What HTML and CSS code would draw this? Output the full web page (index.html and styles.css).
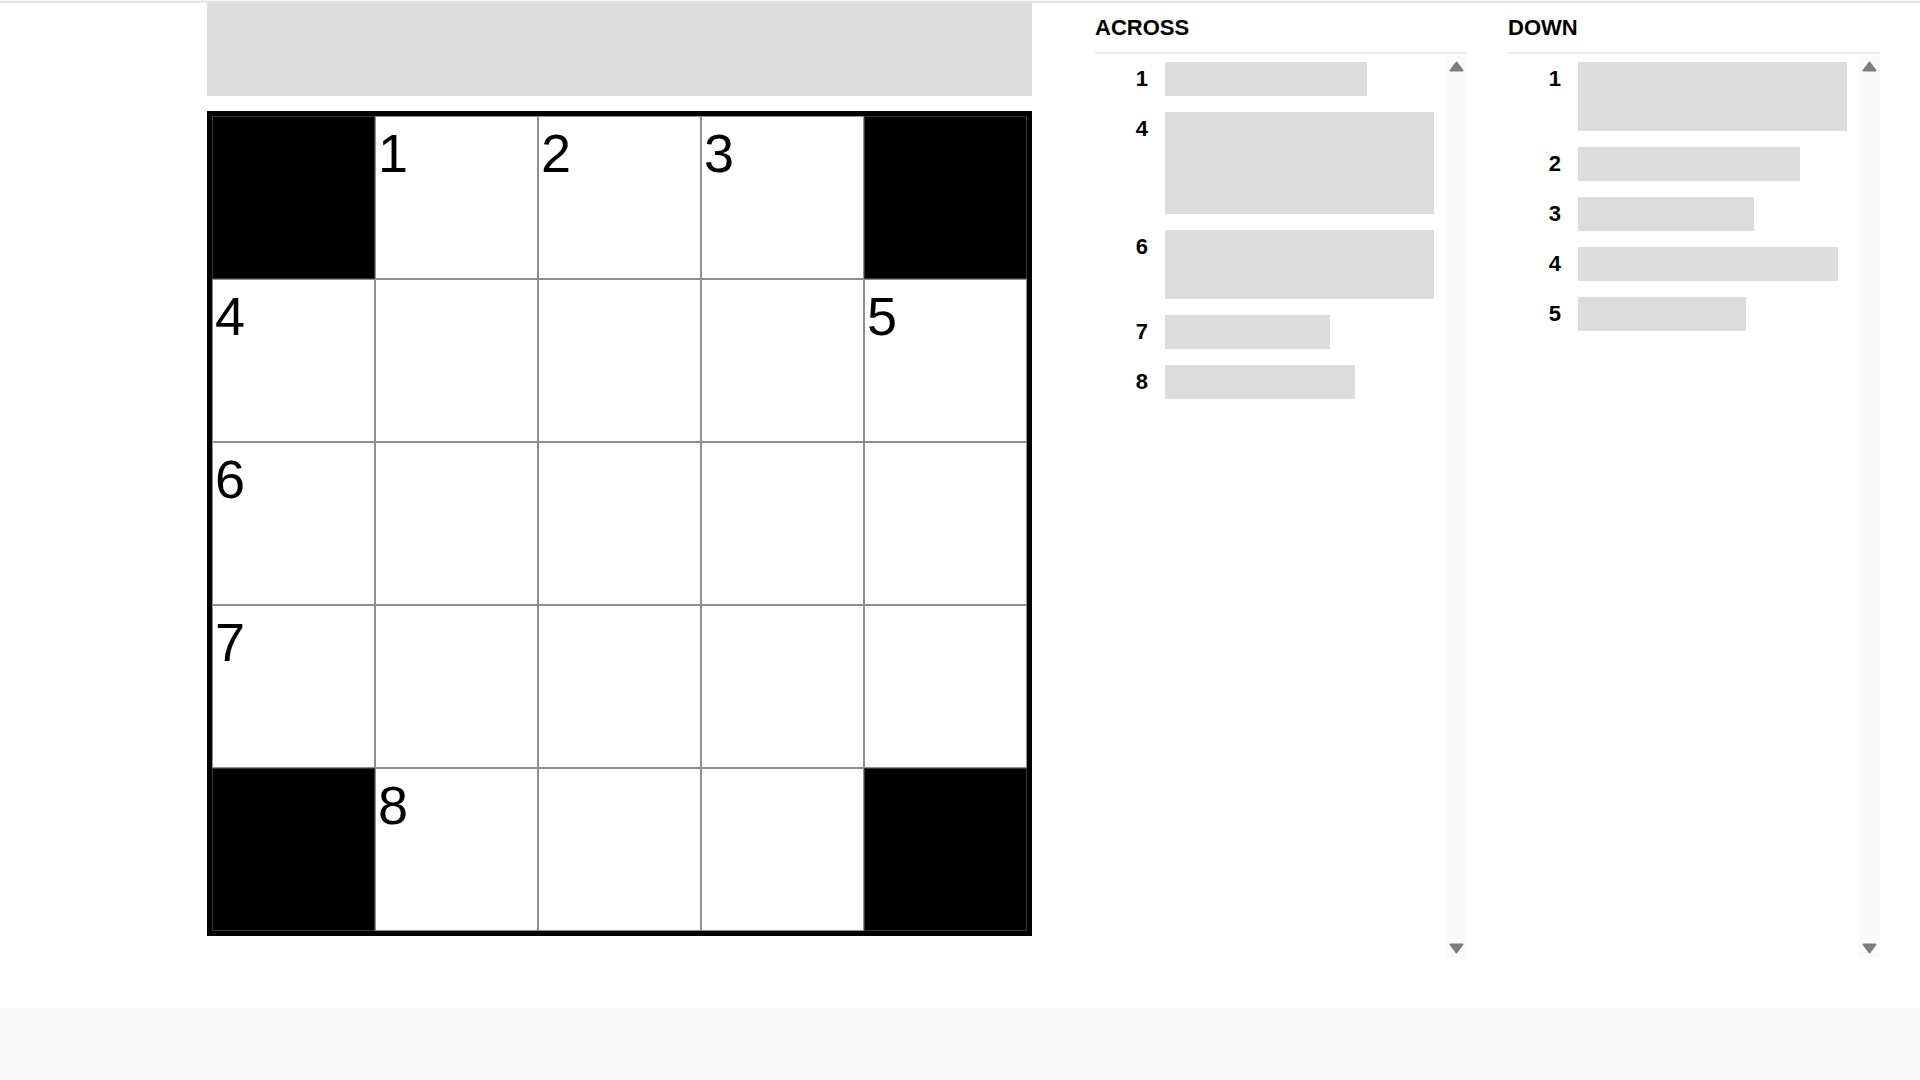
FILE: index.html
```html
<!DOCTYPE html>
<html lang="en">
<head>
<meta charset="utf-8">
<title>Mini Crossword</title>
<link rel="stylesheet" href="styles.css">
</head>
<body>
<div class="topline"></div>
<main class="main">
  <section class="board">
    <div class="clue-banner"></div>
    <div class="grid">
      <div class="cell block"></div>
      <div class="cell">1</div>
      <div class="cell">2</div>
      <div class="cell">3</div>
      <div class="cell block"></div>

      <div class="cell">4</div>
      <div class="cell"></div>
      <div class="cell"></div>
      <div class="cell"></div>
      <div class="cell">5</div>

      <div class="cell">6</div>
      <div class="cell"></div>
      <div class="cell"></div>
      <div class="cell"></div>
      <div class="cell"></div>

      <div class="cell">7</div>
      <div class="cell"></div>
      <div class="cell"></div>
      <div class="cell"></div>
      <div class="cell"></div>

      <div class="cell block"></div>
      <div class="cell">8</div>
      <div class="cell"></div>
      <div class="cell"></div>
      <div class="cell block"></div>
    </div>
  </section>

  <section class="clues across">
    <h2 class="clues-title">ACROSS</h2>
    <div class="clues-body">
      <ol class="clue-list">
        <li class="clue"><span class="clue-num">1</span><span class="clue-bar l1" style="width:202px"></span></li>
        <li class="clue"><span class="clue-num">4</span><span class="clue-bar l3" style="width:269px"></span></li>
        <li class="clue"><span class="clue-num">6</span><span class="clue-bar l2" style="width:269px"></span></li>
        <li class="clue"><span class="clue-num">7</span><span class="clue-bar l1" style="width:165px"></span></li>
        <li class="clue"><span class="clue-num">8</span><span class="clue-bar l1" style="width:190px"></span></li>
      </ol>
      <div class="scrollbar">
        <svg class="arrow" width="15" height="11" viewBox="0 0 15 11"><polygon points="7.5,1.5 13.5,9.5 1.5,9.5" /></svg>
        <svg class="arrow" width="15" height="11" viewBox="0 0 15 11"><polygon points="1.5,1.5 13.5,1.5 7.5,9.5" /></svg>
      </div>
    </div>
  </section>

  <section class="clues down">
    <h2 class="clues-title">DOWN</h2>
    <div class="clues-body">
      <ol class="clue-list">
        <li class="clue"><span class="clue-num">1</span><span class="clue-bar l2" style="width:269px"></span></li>
        <li class="clue"><span class="clue-num">2</span><span class="clue-bar l1" style="width:222px"></span></li>
        <li class="clue"><span class="clue-num">3</span><span class="clue-bar l1" style="width:176px"></span></li>
        <li class="clue"><span class="clue-num">4</span><span class="clue-bar l1" style="width:260px"></span></li>
        <li class="clue"><span class="clue-num">5</span><span class="clue-bar l1" style="width:168px"></span></li>
      </ol>
      <div class="scrollbar">
        <svg class="arrow" width="15" height="11" viewBox="0 0 15 11"><polygon points="7.5,1.5 13.5,9.5 1.5,9.5" /></svg>
        <svg class="arrow" width="15" height="11" viewBox="0 0 15 11"><polygon points="1.5,1.5 13.5,1.5 7.5,9.5" /></svg>
      </div>
    </div>
  </section>
</main>
<footer class="footer"></footer>
</body>
</html>
```

FILE: styles.css
```css
* {
  box-sizing: border-box;
}

html, body {
  margin: 0;
  padding: 0;
  background: #ffffff;
  font-family: "Liberation Sans", Arial, sans-serif;
  color: #000;
}

body {
  width: 1920px;
  height: 1080px;
  overflow: hidden;
}

.topline {
  height: 3px;
  border-top: 1px solid #f4f4f4;
  background: #e3e3e3;
}

.main {
  display: flex;
  align-items: flex-start;
  height: 1005px;
  padding-left: 207px;
}

.board {
  width: 825px;
  display: flex;
  flex-direction: column;
}

.clue-banner {
  height: 93px;
  background: #dcdcdc;
  margin-bottom: 15px;
}

.grid {
  display: grid;
  grid-template-columns: repeat(5, 163px);
  grid-template-rows: repeat(5, 163px);
  border: 5px solid #000;
  width: 825px;
  height: 825px;
  background: #000;
}

.cell {
  background: #fff;
  border: 1px solid #8e8e8e;
  font-size: 54px;
  line-height: 1;
  padding: 9px 0 0 2px;
  color: #000;
}

.cell.block {
  background: #000;
  border-color: #363636;
}

.clues {
  width: 372px;
  display: flex;
  flex-direction: column;
}

.across {
  margin-left: 63px;
}

.down {
  margin-left: 41px;
}

.clues-title {
  margin: 0;
  padding: 12px 0 12px 0;
  font-size: 22px;
  line-height: 25px;
  font-weight: 700;
  border-bottom: 2px solid #ebebeb;
}

.clues-body {
  display: flex;
  height: 904px;
}

.clue-list {
  flex: 1;
  list-style: none;
  margin: 0;
  padding: 8px 0 0 0;
}

.clue {
  display: flex;
  align-items: flex-start;
  margin-bottom: 16px;
}

.clue-num {
  width: 53px;
  margin-right: 17px;
  text-align: right;
  font-size: 22px;
  font-weight: 700;
  line-height: 34px;
  flex: none;
}

.clue-bar {
  display: block;
  background: #dcdcdc;
  flex: none;
}

.clue-bar.l1 { height: 34px; }
.clue-bar.l2 { height: 69px; }
.clue-bar.l3 { height: 102px; }

.scrollbar {
  width: 21px;
  margin-top: 2px;
  background: #fafafa;
  display: flex;
  flex-direction: column;
  justify-content: space-between;
  align-items: center;
  padding: 5px 0 4px 0;
}

.arrow polygon {
  fill: #7d7d7d;
  stroke: #7d7d7d;
  stroke-width: 2;
  stroke-linejoin: round;
}

.footer {
  height: 72px;
  background: #fafafa;
}
```
